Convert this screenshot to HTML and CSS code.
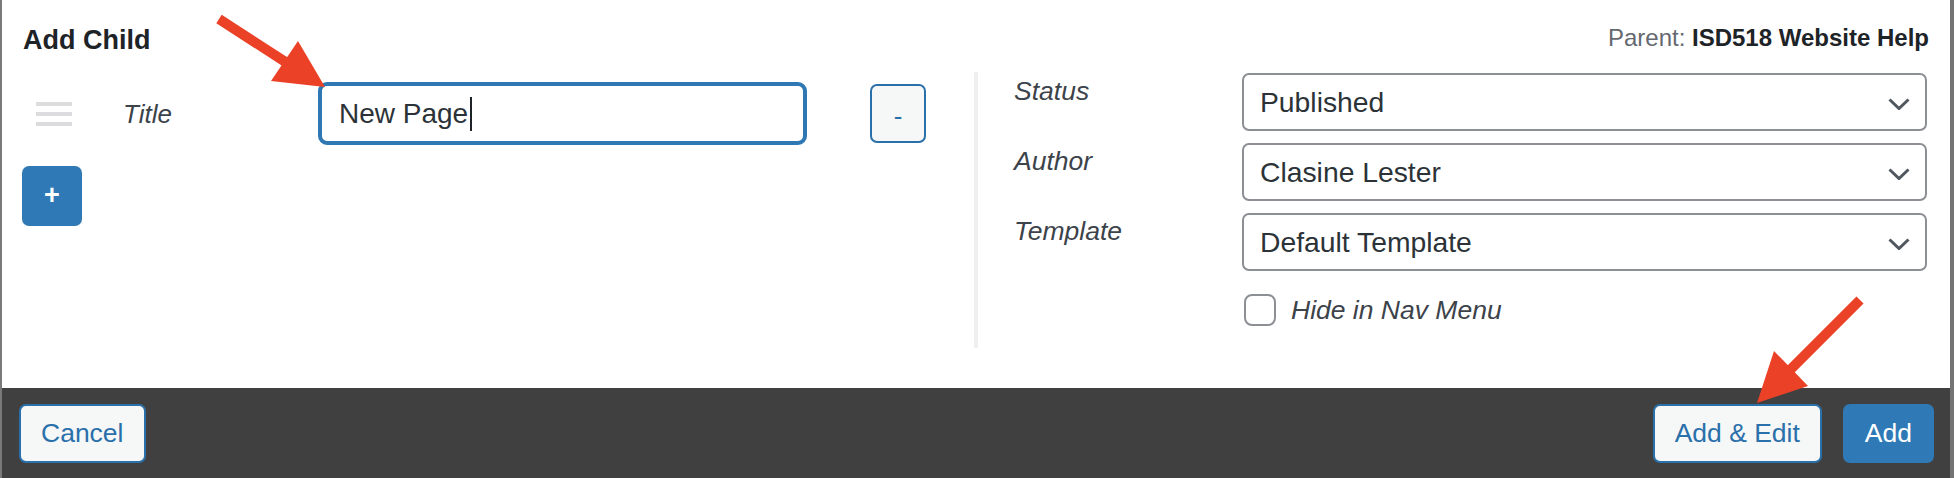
FILE: index.html
```html
<!DOCTYPE html>
<html lang="en">
<head>
<meta charset="utf-8">
<title>Add Child</title>
<link rel="stylesheet" href="styles.css">
</head>
<body>
<div class="modal">
  <div class="content">
    <div class="header">
      <h1 class="title">Add Child</h1>
      <div class="parent">Parent: <strong>ISD518 Website Help</strong></div>
    </div>
    <div class="body">
      <div class="left">
        <div class="row">
          <div class="drag"><span></span><span></span><span></span></div>
          <div class="field-label">Title</div>
          <div class="input"><span class="value">New Page</span><span class="caret"></span></div>
          <button class="btn-remove">-</button>
        </div>
        <div class="row-add">
          <button class="btn-add-row">+</button>
        </div>
      </div>
      <div class="right">
        <div class="field">
          <div class="label">Status</div>
          <div class="select"><span>Published</span><svg class="chev" viewBox="0 0 22 12" width="22" height="12"><path d="M1.5 1.5 L11 10.5 L20.5 1.5" fill="none" stroke="#50575e" stroke-width="3" stroke-linejoin="miter"/></svg></div>
        </div>
        <div class="field">
          <div class="label">Author</div>
          <div class="select"><span>Clasine Lester</span><svg class="chev" viewBox="0 0 22 12" width="22" height="12"><path d="M1.5 1.5 L11 10.5 L20.5 1.5" fill="none" stroke="#50575e" stroke-width="3" stroke-linejoin="miter"/></svg></div>
        </div>
        <div class="field">
          <div class="label">Template</div>
          <div class="select"><span>Default Template</span><svg class="chev" viewBox="0 0 22 12" width="22" height="12"><path d="M1.5 1.5 L11 10.5 L20.5 1.5" fill="none" stroke="#50575e" stroke-width="3" stroke-linejoin="miter"/></svg></div>
        </div>
        <div class="check-row">
          <span class="checkbox"></span>
          <span class="check-label">Hide in Nav Menu</span>
        </div>
      </div>
    </div>
  </div>
  <div class="footer">
    <button class="btn btn-secondary">Cancel</button>
    <div class="actions">
      <button class="btn btn-secondary">Add &amp; Edit</button>
      <button class="btn btn-primary">Add</button>
    </div>
  </div>
</div>
<svg class="annotations" width="1954" height="478" viewBox="0 0 1954 478">
  <line x1="219" y1="19" x2="287" y2="63" stroke="#eb4126" stroke-width="10"/>
  <polygon points="325,87 298,41 271,81" fill="#eb4126"/>
  <line x1="1860" y1="300" x2="1789" y2="371" stroke="#eb4126" stroke-width="10"/>
  <polygon points="1757,403 1774,351 1808,386" fill="#eb4126"/>
</svg>
</body>
</html>
```

FILE: styles.css
```css
* { box-sizing: border-box; }

html, body {
  margin: 0;
  padding: 0;
  width: 1954px;
  height: 478px;
  overflow: hidden;
  background: #ffffff;
  font-family: "Liberation Sans", Arial, sans-serif;
  color: #2c3338;
}

.modal {
  position: relative;
  width: 1954px;
  height: 478px;
  border-left: 2px solid #7a7a7a;
  border-right: 4px solid #747474;
  display: flex;
  flex-direction: column;
}

.content {
  height: 388px;
  background: #ffffff;
}

.header {
  display: flex;
  justify-content: space-between;
  align-items: flex-start;
  padding: 24px 21px 0 21px;
  height: 56px;
  margin-bottom: 16px;
}

.title {
  margin: 0;
  font-size: 27px;
  line-height: 32px;
  font-weight: 700;
  color: #1d2327;
}

.parent {
  margin-top: -2px;
  font-size: 24px;
  line-height: 32px;
  color: #646970;
}

.parent strong {
  color: #1d2327;
  font-weight: 700;
}

.body {
  display: flex;
  height: 276px;
}

.left {
  width: 972px;
  flex: 0 0 972px;
  padding-top: 10px;
}

.row {
  display: flex;
  align-items: center;
  height: 63px;
}

.drag {
  margin-left: 34px;
  width: 36px;
  height: 24px;
  display: flex;
  flex-direction: column;
  justify-content: space-between;
}

.drag span {
  display: block;
  height: 4px;
  background: #dcdcde;
}

.field-label {
  margin-left: 51px;
  width: 195px;
  font-size: 26px;
  line-height: 32px;
  font-style: italic;
  color: #3c434a;
}

.input {
  width: 489px;
  height: 63px;
  border: 4px solid #2f78b4;
  border-radius: 9px;
  padding-left: 17px;
  display: flex;
  align-items: center;
  font-size: 28px;
  color: #2c3338;
  background: #ffffff;
}

.caret {
  display: inline-block;
  width: 2px;
  height: 34px;
  margin-left: 2px;
  background: #1d2327;
}

.btn-remove {
  margin-left: 63px;
  width: 56px;
  height: 59px;
  padding: 0;
  border: 2px solid #2a70aa;
  border-radius: 7px;
  background: #f6f7f7;
  color: #2a70aa;
  font-family: "Liberation Sans", Arial, sans-serif;
  font-size: 26px;
  line-height: 1;
  padding-top: 4px;
}

.row-add {
  margin-top: 21px;
}

.btn-add-row {
  margin-left: 20px;
  width: 60px;
  height: 60px;
  padding: 0 0 2px 0;
  border: none;
  border-radius: 7px;
  background: #2f7ab6;
  color: #ffffff;
  font-family: "Liberation Sans", Arial, sans-serif;
  font-size: 27px;
  font-weight: 700;
  line-height: 1;
}

.right {
  flex: 1;
  border-left: 4px solid #f0f0f1;
  padding: 1px 23px 0 36px;
}

.field {
  display: flex;
  height: 58px;
  margin-bottom: 12px;
}

.label {
  width: 228px;
  flex: 0 0 228px;
  padding-top: 2px;
  font-size: 26.5px;
  line-height: 32px;
  font-style: italic;
  color: #3c434a;
}

.select {
  flex: 1;
  height: 58px;
  border: 2px solid #8c8f94;
  border-radius: 7px;
  padding: 0 15px 0 16px;
  display: flex;
  align-items: center;
  justify-content: space-between;
  font-size: 28.3px;
  color: #2c3338;
  background: #ffffff;
}

.chev {
  display: block;
  margin-top: 3px;
}

.check-row {
  display: flex;
  align-items: center;
  margin-top: 23px;
  padding-left: 230px;
}

.checkbox {
  display: block;
  width: 32px;
  height: 32px;
  border: 2px solid #8c8f94;
  border-radius: 8px;
  background: #ffffff;
}

.check-label {
  margin-left: 15px;
  font-size: 26.5px;
  line-height: 32px;
  font-style: italic;
  color: #3c434a;
}

.footer {
  height: 90px;
  background: #404040;
  display: flex;
  justify-content: space-between;
  align-items: flex-start;
  padding: 16px 16px 0 17px;
}

.actions {
  display: flex;
  gap: 21px;
}

.btn {
  height: 59px;
  padding: 0 20px;
  border-radius: 7px;
  font-family: "Liberation Sans", Arial, sans-serif;
  font-size: 26.5px;
  line-height: 1;
}

.btn-secondary {
  border: 2px solid #2a70aa;
  background: #f6f7f7;
  color: #2a70aa;
}

.btn-primary {
  border: 2px solid #2f7ab6;
  background: #2f7ab6;
  color: #ffffff;
}

.annotations {
  position: absolute;
  left: 0;
  top: 0;
  pointer-events: none;
}
```
